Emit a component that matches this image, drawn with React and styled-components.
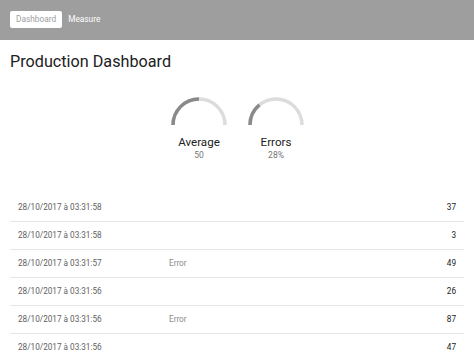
import React from 'react';
import styled, { createGlobalStyle } from 'styled-components';

const GlobalStyle = createGlobalStyle`
  body {
    margin: 0;
    background: #ffffff;
    font-family: Roboto, "Liberation Sans", sans-serif;
  }
`;

const rows = [
  { date: '28/10/2017 à 03:31:58', status: '', value: 37 },
  { date: '28/10/2017 à 03:31:58', status: '', value: 3 },
  { date: '28/10/2017 à 03:31:57', status: 'Error', value: 49 },
  { date: '28/10/2017 à 03:31:56', status: '', value: 26 },
  { date: '28/10/2017 à 03:31:56', status: 'Error', value: 87 },
  { date: '28/10/2017 à 03:31:56', status: '', value: 47 },
];

const Gauge = ({ percent }) => {
  const r = 26;
  const cx = 28;
  const cy = 29;
  const angle = Math.PI * (1 - percent / 100);
  const x = cx + r * Math.cos(angle);
  const y = cy - r * Math.sin(angle);
  return (
    <svg width="56" height="30" viewBox="0 0 56 30">
      <path
        d={`M ${cx - r} ${cy} A ${r} ${r} 0 0 1 ${cx + r} ${cy}`}
        fill="none"
        stroke="#dcdcdc"
        strokeWidth="3.5"
      />
      <path
        d={`M ${cx - r} ${cy} A ${r} ${r} 0 0 1 ${x} ${y}`}
        fill="none"
        stroke="#8a8a8a"
        strokeWidth="3.5"
      />
    </svg>
  );
};

const App = () => {
  return (
    <>
      <GlobalStyle />
      <TopBar>
        <NavButton active>Dashboard</NavButton>
        <NavButton>Measure</NavButton>
      </TopBar>
      <Title>Production Dashboard</Title>
      <Gauges>
        <GaugeCard>
          <Gauge percent={50} />
          <GaugeLabel>Average</GaugeLabel>
          <GaugeValue>50</GaugeValue>
        </GaugeCard>
        <GaugeCard>
          <Gauge percent={28} />
          <GaugeLabel>Errors</GaugeLabel>
          <GaugeValue>28%</GaugeValue>
        </GaugeCard>
      </Gauges>
      <Table>
        <tbody>
          {rows.map((row, i) => (
            <Row key={i} last={i === rows.length - 1}>
              <DateCell>{row.date}</DateCell>
              <StatusCell>{row.status}</StatusCell>
              <ValueCell>{row.value}</ValueCell>
            </Row>
          ))}
        </tbody>
      </Table>
    </>
  );
};

const TopBar = styled.div`
  height: 40px;
  background: #9e9e9e;
  display: flex;
  align-items: center;
  padding: 0 10px;
  box-sizing: border-box;
`;

const NavButton = styled.div`
  font-size: 8.3px;
  line-height: 17px;
  height: 17px;
  padding: 0 6px;
  border-radius: 2px;
  background: ${(p) => (p.active ? '#ffffff' : 'transparent')};
  color: ${(p) => (p.active ? '#9e9e9e' : '#ffffff')};
  margin-top: -1px;
`;

const Title = styled.h1`
  margin: 12px 10px 0;
  font-size: 16.2px;
  font-weight: 400;
  color: #212121;
  line-height: 20px;
`;

const Gauges = styled.div`
  display: flex;
  justify-content: center;
  gap: 21px;
  margin-top: 24px;
  padding-left: 1px;
`;

const GaugeCard = styled.div`
  display: flex;
  flex-direction: column;
  align-items: center;
  width: 56px;
`;

const GaugeLabel = styled.div`
  margin-top: 9px;
  font-size: 11.6px;
  line-height: 14px;
  color: #212121;
`;

const GaugeValue = styled.div`
  font-size: 8.5px;
  line-height: 12px;
  color: #757575;
`;

const Table = styled.table`
  margin: 32px 10px 0;
  width: calc(100% - 20px);
  border-collapse: collapse;
`;

const Row = styled.tr`
  height: 28px;
  border-bottom: ${(p) => (p.last ? 'none' : '1px solid #e6e6e6')};
`;

const Cell = styled.td`
  font-size: 8.2px;
  padding: 0 8px;
  color: #616161;
`;

const DateCell = styled(Cell)`
  width: 135px;
`;

const StatusCell = styled(Cell)`
  color: #8a8a8a;
`;

const ValueCell = styled(Cell)`
  text-align: right;
  color: #212121;
`;

export default App;
